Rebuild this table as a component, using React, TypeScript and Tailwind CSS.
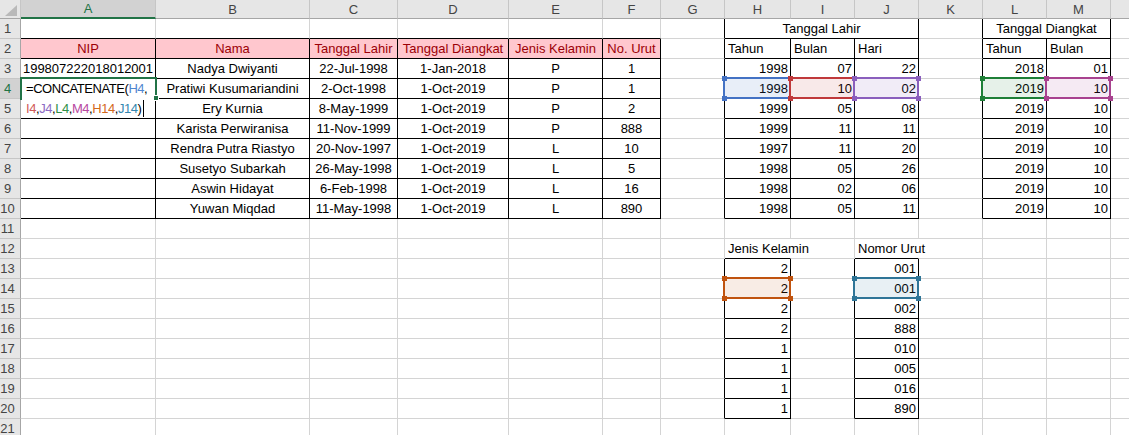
import React from "react";

type Align = "l" | "c" | "r";
type Cell = { t: string; a: Align; span?: number; pink?: boolean; overflow?: boolean };

const COLS = ["A", "B", "C", "D", "E", "F", "G", "H", "I", "J", "K", "L", "M", "N"];
const ROW_COUNT = 21;

const mainTable: string[][] = [
  ["NIP", "Nama", "Tanggal Lahir", "Tanggal Diangkat", "Jenis Kelamin", "No. Urut"],
  ["199807222018012001", "Nadya Dwiyanti", "22-Jul-1998", "1-Jan-2018", "P", "1"],
  ["", "Pratiwi Kusumariandini", "2-Oct-1998", "1-Oct-2019", "P", "1"],
  ["", "Ery Kurnia", "8-May-1999", "1-Oct-2019", "P", "2"],
  ["", "Karista Perwiranisa", "11-Nov-1999", "1-Oct-2019", "P", "888"],
  ["", "Rendra Putra Riastyo", "20-Nov-1997", "1-Oct-2019", "L", "10"],
  ["", "Susetyo Subarkah", "26-May-1998", "1-Oct-2019", "L", "5"],
  ["", "Aswin Hidayat", "6-Feb-1998", "1-Oct-2019", "L", "16"],
  ["", "Yuwan Miqdad", "11-May-1998", "1-Oct-2019", "L", "890"],
];

const lahir = [
  ["1998", "07", "22"],
  ["1998", "10", "02"],
  ["1999", "05", "08"],
  ["1999", "11", "11"],
  ["1997", "11", "20"],
  ["1998", "05", "26"],
  ["1998", "02", "06"],
  ["1998", "05", "11"],
];
const diangkat = [["2018", "01"], ...Array.from({ length: 7 }, () => ["2019", "10"])];
const jenisKelamin = ["2", "2", "2", "2", "1", "1", "1", "1"];
const nomorUrut = ["001", "001", "002", "888", "010", "005", "016", "890"];

function bordered(r: number, c: number) {
  if (r >= 2 && r <= 10 && c >= 0 && c <= 5) return true;
  if (r >= 1 && r <= 10 && c >= 7 && c <= 9) return true;
  if (r >= 1 && r <= 10 && c >= 11 && c <= 12) return true;
  if (r >= 13 && r <= 20 && (c === 7 || c === 9)) return true;
  return false;
}

function cellAt(r: number, c: number): Cell | null | undefined {
  // null = covered by a merged cell
  if (r === 1 && (c === 8 || c === 9 || c === 12)) return null;
  if (r === 1 && c === 7) return { t: "Tanggal Lahir", a: "c", span: 3 };
  if (r === 1 && c === 11) return { t: "Tanggal Diangkat", a: "c", span: 2 };
  if (r >= 2 && r <= 10 && c <= 5) {
    if (r === 4 && c === 0) return { t: "", a: "c" };
    return { t: mainTable[r - 2][c], a: "c", pink: r === 2 };
  }
  if (r === 2 && c >= 7 && c <= 9) return { t: ["Tahun", "Bulan", "Hari"][c - 7], a: "l" };
  if (r === 2 && (c === 11 || c === 12)) return { t: ["Tahun", "Bulan"][c - 11], a: "l" };
  if (r >= 3 && r <= 10 && c >= 7 && c <= 9) return { t: lahir[r - 3][c - 7], a: "r" };
  if (r >= 3 && r <= 10 && (c === 11 || c === 12)) return { t: diangkat[r - 3][c - 11], a: "r" };
  if (r === 12 && c === 7) return { t: "Jenis Kelamin", a: "l", overflow: true };
  if (r === 12 && c === 9) return { t: "Nomor Urut", a: "l", overflow: true };
  if (r >= 13 && r <= 20 && c === 7) return { t: jenisKelamin[r - 13], a: "r" };
  if (r >= 13 && r <= 20 && c === 9) return { t: nomorUrut[r - 13], a: "r" };
  return undefined;
}

function GridCell({ r, c }: { r: number; c: number }) {
  const cell = cellAt(r, c);
  if (cell === null) return null;
  const span = cell?.span ?? 1;
  const last = c + span - 1;
  const rightBlack = bordered(r, last) || bordered(r, last + 1);
  const bottomBlack = bordered(r, c) || bordered(r + 1, c);
  const rightClass = cell?.overflow
    ? "border-r-white"
    : rightBlack
      ? "border-r-black"
      : "border-r-[#d4d4d4]";
  const bottomClass = bottomBlack ? "border-b-black" : "border-b-[#d4d4d4]";
  const align =
    cell?.a === "l" ? "justify-start pl-[3px]" : cell?.a === "r" ? "justify-end pr-[2px]" : "justify-center";
  const spanClass = span === 3 ? "col-span-3" : span === 2 ? "col-span-2" : "";
  return (
    <div
      className={`flex items-end whitespace-nowrap border-r border-b leading-[18px] ${rightClass} ${bottomClass} ${align} ${spanClass} ${
        cell?.pink ? "bg-[#ffc7ce] text-[#9c0006]" : "text-black"
      }`}
    >
      {cell?.t}
    </div>
  );
}

function Highlight({
  x1,
  x2,
  y1,
  y2,
  border,
  fill,
}: {
  x1: number;
  x2: number;
  y1: number;
  y2: number;
  border: string;
  fill: string;
}) {
  const corners = [
    [x1, y1],
    [x2, y1],
    [x1, y2],
    [x2, y2],
  ];
  return (
    <>
      <div
        className="absolute border-2"
        style={{
          left: x1 - 1,
          top: y1 - 1,
          width: x2 - x1 + 2,
          height: y2 - y1 + 2,
          borderColor: border,
          backgroundColor: fill,
        }}
      />
      {corners.map(([x, y], i) => (
        <div
          key={i}
          className="absolute h-[5px] w-[5px]"
          style={{ left: x - 2, top: y - 2, backgroundColor: border }}
        />
      ))}
    </>
  );
}

const refs = [
  { x1: 724, x2: 790, y1: 78, y2: 98, border: "#4472c4", fill: "rgba(68,114,196,0.12)" },
  { x1: 790, x2: 854, y1: 78, y2: 98, border: "#c0393b", fill: "rgba(192,57,59,0.11)" },
  { x1: 854, x2: 918, y1: 78, y2: 98, border: "#8a5fbd", fill: "rgba(138,95,189,0.12)" },
  { x1: 982, x2: 1046, y1: 78, y2: 98, border: "#1e7f37", fill: "rgba(30,127,55,0.11)" },
  { x1: 1046, x2: 1110, y1: 78, y2: 98, border: "#a8428f", fill: "rgba(168,66,143,0.11)" },
  { x1: 724, x2: 790, y1: 278, y2: 298, border: "#c0530f", fill: "rgba(192,83,15,0.11)" },
  { x1: 854, x2: 918, y1: 278, y2: 298, border: "#2f7597", fill: "rgba(47,117,151,0.11)" },
];

export default function App() {
  const rows = Array.from({ length: ROW_COUNT }, (_, i) => i + 1);
  return (
    <div
      className="relative h-[435px] w-[1129px] overflow-hidden bg-white text-[13px]"
      style={{ fontFamily: '"Liberation Sans", Arial, sans-serif' }}
    >
      <div className="grid grid-cols-[21px_135px_154px_88px_111px_94px_58px_64px_66px_64px_64px_64px_64px_64px_64px] grid-rows-[19px_repeat(21,20px)]">
        {/* corner */}
        <div className="flex items-end justify-end border-r border-b border-r-[#c6c6c6] border-b-[#a6a6a6] bg-[#e6e6e6] pr-[3px] pb-[2px]">
          <svg width="12" height="11" viewBox="0 0 12 11">
            <polygon points="12,0 12,11 0,11" fill="#b9b9b9" />
          </svg>
        </div>
        {COLS.map((col, i) => (
          <div
            key={col}
            className={`flex items-center justify-center border-r border-r-[#c6c6c6] leading-none ${
              i === 0
                ? "border-b-2 border-b-[#217346] bg-[#d2d2d2] text-[#217346]"
                : "border-b border-b-[#a6a6a6] bg-[#e6e6e6] text-[#444]"
            }`}
          >
            {/* column N is mostly off screen, its letter is not visible */}
            {col === "N" ? "" : col}
          </div>
        ))}

        {rows.map((r) => (
          <React.Fragment key={r}>
            <div
              className={`flex items-end justify-center border-r border-b border-r-[#a6a6a6] border-b-[#c6c6c6] pr-[5px] leading-[18px] ${
                r === 4 ? "bg-[#d2d2d2] text-[#217346]" : "bg-[#e6e6e6] text-[#444]"
              }`}
            >
              {r}
            </div>
            {COLS.map((_, c) => (
              <GridCell key={c} r={r} c={c} />
            ))}
          </React.Fragment>
        ))}
      </div>

      {/* formula reference highlights */}
      {refs.map((h, i) => (
        <Highlight key={i} {...h} />
      ))}

      {/* active cell A4 */}
      <div className="absolute left-[20px] top-[77px] h-[23px] w-[137px] border-2 border-[#217346]" />
      <div className="absolute left-[153px] top-[95px] h-[6px] w-[6px] border border-white bg-[#217346]" />

      {/* in-cell editor */}
      <div className="absolute left-[22px] top-[79px] h-[39px] w-[132px] bg-white pl-[4px] leading-[19.5px] tracking-[-0.45px] whitespace-nowrap text-black">
        <div>
          =CONCATENATE(<span className="text-[#4f86d0]">H4</span>,
        </div>
        <div className="flex items-center">
          <span className="text-[#d05a58]">I4</span>,<span className="text-[#8d6cc4]">J4</span>,
          <span className="text-[#2f9148]">L4</span>,<span className="text-[#b8489f]">M4</span>,
          <span className="text-[#d3691d]">H14</span>,<span className="text-[#3587b0]">J14</span>)
          <span className="ml-[2px] inline-block h-[17px] w-px bg-black" />
        </div>
      </div>
    </div>
  );
}
